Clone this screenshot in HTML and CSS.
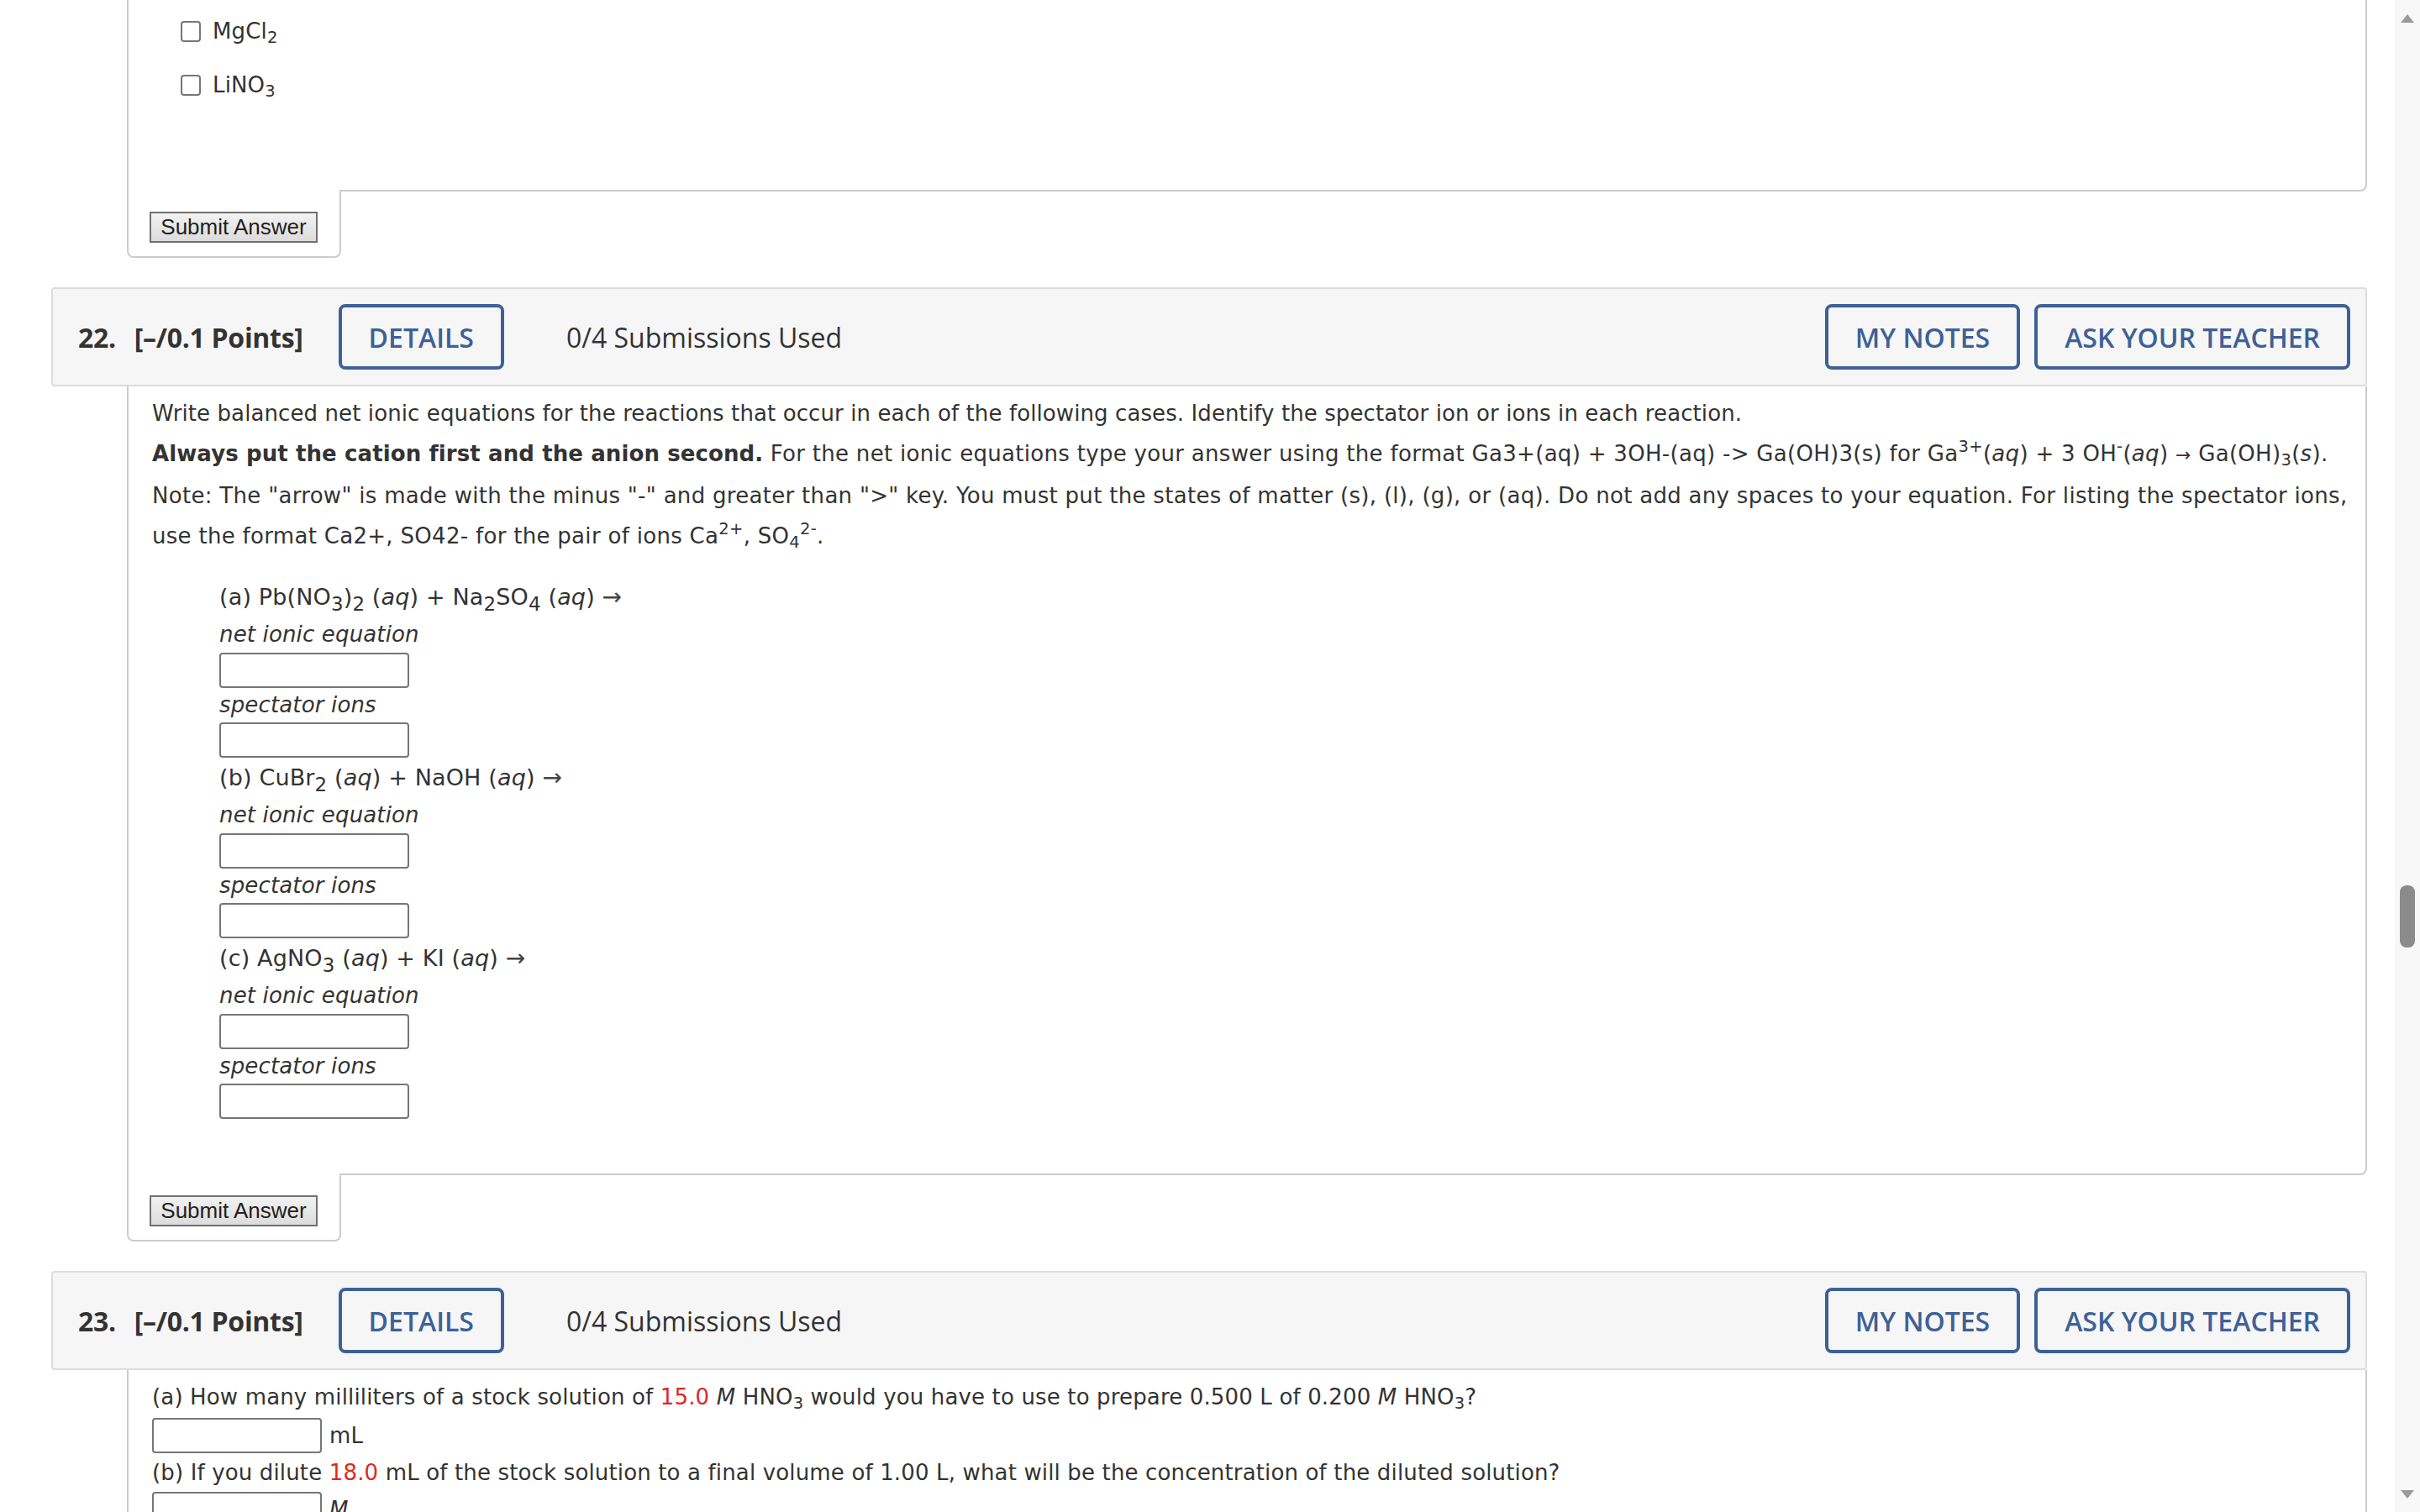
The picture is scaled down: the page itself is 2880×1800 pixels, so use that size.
FILE: index.html
```html
<!DOCTYPE html>
<html lang="en">
<head>
<meta charset="utf-8">
<title>Questions</title>
<link rel="stylesheet" href="styles.css">
</head>
<body>
<div class="page">
  <main class="content">
    <section class="question">
      <div class="qbody qbody-top">
        <div class="choices">
          <label class="choice"><input type="checkbox" class="cb"><span>MgCl<sub>2</sub></span></label>
          <label class="choice"><input type="checkbox" class="cb"><span>LiNO<sub>3</sub></span></label>
        </div>
      </div>
      <div class="qfoot"><button class="submit">Submit Answer</button></div>
    </section>

    <section class="question">
      <header class="qhead">
        <span class="qnum">22.</span><span class="qpts">[–/0.1 Points]</span>
        <button class="hbtn details">DETAILS</button>
        <span class="subs">0/4 Submissions Used</span>
        <button class="hbtn notes">MY NOTES</button>
        <button class="hbtn">ASK YOUR TEACHER</button>
      </header>
      <div class="qbody">
        <p class="intro">Write balanced net ionic equations for the reactions that occur in each of the following cases. Identify the spectator ion or ions in each reaction.<br><b>Always put the cation first and the anion second.</b> <span class="wide">For the net ionic equations type your answer using the format Ga3+(aq) + 3OH-(aq) -&gt; Ga(OH)3(s) for Ga<sup>3+</sup>(<i>aq</i>) + 3 OH<sup>-</sup>(<i>aq</i>) <span class="arrow-s">→</span> Ga(OH)<sub>3</sub>(<i>s</i>).</span><br><span class="wide">Note: The "arrow" is made with the minus "-" and greater than "&gt;" key. You must put the states of matter (s), (l), (g), or (aq). Do not add any spaces to your equation. For listing the spectator ions,</span><br><span class="wide">use the format Ca2+, SO42- for the pair of ions Ca<sup>2+</sup>, SO<sub>4</sub><sup>2-</sup>.</span></p>
        <div class="parts">
          <div class="part">
            <div class="ptitle">(a) Pb(NO<sub>3</sub>)<sub>2</sub> (<i>aq</i>) + Na<sub>2</sub>SO<sub>4</sub> (<i>aq</i>) <span class="arrow">→</span></div>
            <div class="plabel">net ionic equation</div>
            <input type="text" class="field">
            <div class="plabel">spectator ions</div>
            <input type="text" class="field">
          </div>
          <div class="part">
            <div class="ptitle">(b) CuBr<sub>2</sub> (<i>aq</i>) + NaOH (<i>aq</i>) <span class="arrow">→</span></div>
            <div class="plabel">net ionic equation</div>
            <input type="text" class="field">
            <div class="plabel">spectator ions</div>
            <input type="text" class="field">
          </div>
          <div class="part">
            <div class="ptitle">(c) AgNO<sub>3</sub> (<i>aq</i>) + KI (<i>aq</i>) <span class="arrow">→</span></div>
            <div class="plabel">net ionic equation</div>
            <input type="text" class="field">
            <div class="plabel">spectator ions</div>
            <input type="text" class="field">
          </div>
        </div>
      </div>
      <div class="qfoot"><button class="submit">Submit Answer</button></div>
    </section>

    <section class="question">
      <header class="qhead">
        <span class="qnum">23.</span><span class="qpts">[–/0.1 Points]</span>
        <button class="hbtn details">DETAILS</button>
        <span class="subs">0/4 Submissions Used</span>
        <button class="hbtn notes">MY NOTES</button>
        <button class="hbtn">ASK YOUR TEACHER</button>
      </header>
      <div class="qbody qbody-open">
        <p class="line">(a) How many milliliters of a stock solution of <span class="red">15.0</span> <i>M</i> HNO<sub>3</sub> would you have to use to prepare 0.500 L of 0.200 <i>M</i> HNO<sub>3</sub>?</p>
        <div class="answer"><input type="text" class="field short"><span class="unit">mL</span></div>
        <p class="line line-b">(b) If you dilute <span class="red">18.0</span> mL of the stock solution to a final volume of 1.00 L, what will be the concentration of the diluted solution?</p>
        <div class="answer"><input type="text" class="field short"><span class="unit"><i>M</i></span></div>
      </div>
    </section>
  </main>

  <div class="scrollbar">
    <svg class="sarrow up" width="18" height="12" viewBox="0 0 18 12"><polygon points="9,1 17,11 1,11" fill="#9a9a9a"/></svg>
    <div class="thumb"></div>
    <svg class="sarrow down" width="18" height="12" viewBox="0 0 18 12"><polygon points="1,1 17,1 9,11" fill="#9a9a9a"/></svg>
  </div>
</div>
</body>
</html>
```

FILE: styles.css
```css
* { box-sizing: border-box; }

html, body {
  margin: 0;
  padding: 0;
  background: #fff;
  height: 100%;
  overflow: hidden;
}

body {
  font-family: "DejaVu Sans", Verdana, sans-serif;
  font-size: 26px;
  letter-spacing: 0.15px;
  color: #333;
}

.page {
  display: flex;
  height: 1800px;
}

.content {
  flex: 1;
  min-width: 0;
  padding: 0 33px 0 61px;
  overflow: hidden;
}

sub, sup {
  font-size: 75%;
  line-height: 0;
}
sub { vertical-align: -0.28em; }
sup { vertical-align: 0.55em; }

/* ---------- question body panels ---------- */
.qbody {
  margin-left: 90px;
  background: #fff;
  border: 2px solid #ccc;
  border-top: none;
  border-bottom-right-radius: 8px;
  padding: 8px 20px 65px 28px;
}

.qbody-top {
  height: 228px;
  padding: 5px 24px 0 62px;
}

.qbody-open {
  border-bottom: none;
  padding-bottom: 0;
}

.choices {
  display: flex;
  flex-direction: column;
}

.choice {
  display: flex;
  align-items: center;
  height: 64px;
}

.cb {
  appearance: none;
  -webkit-appearance: none;
  margin: 0 14px 0 0;
  width: 24px;
  height: 25px;
  border: 2px solid #767676;
  border-radius: 4px;
  background: #fff;
}

/* submit tab */
.qfoot {
  margin-left: 90px;
  margin-top: -2px;
  width: 255px;
  background: #fff;
  border: 2px solid #ccc;
  border-top: none;
  border-radius: 0 0 8px 8px;
  padding: 26px 26px 16px 25px;
}

.submit {
  display: block;
  width: 200px;
  height: 37px;
  margin: 0;
  padding: 0;
  font-family: "Liberation Sans", Arial, sans-serif;
  font-size: 26px;
  letter-spacing: 0;
  color: #222;
  background: linear-gradient(#f2f2f2, #dcdcdc);
  border: 2px solid #707070;
  border-radius: 0;
}

/* ---------- header bar ---------- */
.qhead {
  display: flex;
  align-items: center;
  margin-top: 35px;
  height: 118px;
  background: #f6f6f6;
  border: 2px solid #ddd;
  border-radius: 4px;
  padding: 0 18px 0 30px;
  font-family: "Open Sans", sans-serif;
  font-size: 32px;
  letter-spacing: 0;
  color: #333;
}

.qnum, .qpts {
  font-weight: 700;
  letter-spacing: -0.3px;
}

.qpts { margin-left: 22px; }

.hbtn {
  height: 78px;
  margin: 0;
  padding: 0 32px;
  font-family: "Open Sans", sans-serif;
  font-size: 32px;
  font-weight: 600;
  color: #3d6197;
  background: transparent;
  border: 4px solid #3d6197;
  border-radius: 8px;
}

.hbtn + .hbtn { margin-left: 17px; }

.details { margin-left: 42px; }

.subs { margin-left: 74px; }

.notes { margin-left: auto; }

/* ---------- question 22 content ---------- */
.intro {
  margin: 0;
  line-height: 48px;
  white-space: nowrap;
  letter-spacing: 0.1px;
}

.intro .wide {
  letter-spacing: 0.3px;
}

.arrow-s {
  font-size: 22px;
}

.parts {
  margin-top: 25px;
  padding-left: 80px;
}

.ptitle {
  font-size: 27px;
  line-height: 48px;
}

.ptitle sub {
  font-size: 85%;
  vertical-align: -0.3em;
}

.arrow {
  font-size: 28px;
  color: #444;
}

.plabel {
  font-style: italic;
  line-height: 41.5px;
}

.field {
  display: block;
  width: 226px;
  height: 42px;
  margin: 0;
  padding: 0 6px;
  font: inherit;
  background: #fff;
  border: 2px solid #767676;
  border-radius: 4px;
}

/* ---------- question 23 content ---------- */
.line {
  margin: 0;
  line-height: 48px;
}

.line-b {
  line-height: 44px;
}

.answer {
  display: flex;
  align-items: center;
  height: 44px;
}

.field.short { width: 202px; }

.unit { margin-left: 9px; }

.red { color: #e0281e; }

/* ---------- scrollbar ---------- */
.scrollbar {
  width: 30px;
  flex: none;
  background: #f8f8f8;
  display: flex;
  flex-direction: column;
  align-items: center;
}

.sarrow { display: block; flex: none; }
.sarrow.up { margin-top: 16px; }
.sarrow.down { margin-top: auto; margin-bottom: 15px; }

.thumb {
  width: 18px;
  height: 74px;
  margin-top: 1026px;
  background: #8b8b8b;
  border-radius: 8px;
}
```
